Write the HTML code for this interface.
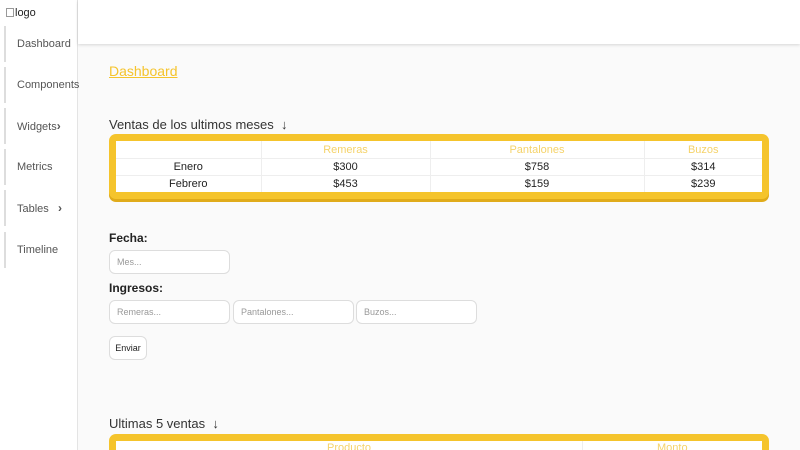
<!DOCTYPE html>
<html><head><meta charset="utf-8"><style>
*{box-sizing:border-box;margin:0;padding:0}
html,body{width:800px;height:450px;overflow:hidden}
body{background:#fafafa;font-family:"Liberation Sans",sans-serif;color:#222;position:relative}
.side{position:absolute;left:0;top:0;width:78px;height:450px;background:#fff;border-right:1px solid #e4e4e4}
.logo{position:absolute;left:6px;top:7px;font-size:11px;color:#222}
.logo span{display:inline-block;width:8px;height:9px;border:1px solid #999;vertical-align:-1px;margin-right:1px}
.item{position:absolute;left:4px;width:72px;height:36px;border-left:2px solid #ddd;font-size:11px;color:#555;padding-left:11px;line-height:36px;white-space:nowrap}
.hdr{position:absolute;left:78px;top:0;width:722px;height:44px;background:#fff;box-shadow:0 1px 3px rgba(0,0,0,.15)}
.crumb{position:absolute;left:109px;top:63px;font-size:14px;color:#f5c42c;text-decoration:underline}
.ttl{position:absolute;left:109px;font-size:13px;color:#333}
.box{position:absolute;left:109px;width:660px;background:#f5c42c;border-radius:7px;padding:7px;box-shadow:0 3px 0 #e0ab1a}
table{width:100%;border-collapse:collapse;background:#fff;font-size:11px}
td,th{height:17px;text-align:center;border-left:1px solid #eee;border-top:1px solid #eee;font-weight:normal;padding-top:1px}
th{color:#f5d36a}
tr td:first-child,tr th:first-child{border-left:none}
tr:first-child th{border-top:none}
.lbl{position:absolute;left:109px;font-size:12px;font-weight:bold;color:#222}
.inp{position:absolute;height:24px;width:121px;border:1px solid #ddd;border-radius:6px;background:#fff;font-size:9px;color:#999;padding-left:7px;line-height:22px}
.btn{position:absolute;left:109px;top:336px;width:38px;height:24px;border:1px solid #ddd;border-radius:6px;background:#fff;font-size:9px;color:#222;text-align:center;line-height:22px}
.box2{position:absolute;left:109px;top:434px;width:660px;height:16px;background:#f5c42c;border-radius:7px 7px 0 0;padding:7px 7px 0;overflow:hidden}
.box2 div{background:#fff;height:9px;position:relative;font-size:11px;color:#f5d36a;overflow:hidden}
</style></head><body>
<div class="side">
<div class="logo"><span></span>logo</div>
<div class="item" style="top:26px">Dashboard</div>
<div class="item" style="top:67px">Components</div>
<div class="item" style="top:108px">Widgets<b style="font-size:12px">›</b></div>
<div class="item" style="top:149px">Metrics</div>
<div class="item" style="top:190px">Tables &nbsp;&nbsp;<b style="font-size:12px">›</b></div>
<div class="item" style="top:232px">Timeline</div>
</div>
<div class="hdr"></div>
<div class="crumb">Dashboard</div>
<div class="ttl" style="top:117px">Ventas de los ultimos meses &nbsp;↓</div>
<div class="box" style="top:134px">
<table>
<tr><th style="width:145px"></th><th style="width:169px">Remeras</th><th style="width:214px">Pantalones</th><th>Buzos</th></tr>
<tr><td>Enero</td><td>$300</td><td>$758</td><td>$314</td></tr>
<tr><td>Febrero</td><td>$453</td><td>$159</td><td>$239</td></tr>
</table></div>
<div class="lbl" style="top:231px">Fecha:</div>
<div class="inp" style="left:109px;top:250px">Mes...</div>
<div class="lbl" style="top:281px">Ingresos:</div>
<div class="inp" style="left:109px;top:300px">Remeras...</div>
<div class="inp" style="left:233px;top:300px">Pantalones...</div>
<div class="inp" style="left:356px;top:300px">Buzos...</div>
<div class="btn">Enviar</div>
<div class="ttl" style="top:416px">Ultimas 5 ventas &nbsp;↓</div>
<div class="box2"><div><span style="position:absolute;left:211px;top:2px;line-height:11px">Producto</span><span style="position:absolute;left:466px;top:0;width:1px;height:9px;background:#eee"></span><span style="position:absolute;left:541px;top:2px;line-height:11px">Monto</span></div></div>
</body></html>
